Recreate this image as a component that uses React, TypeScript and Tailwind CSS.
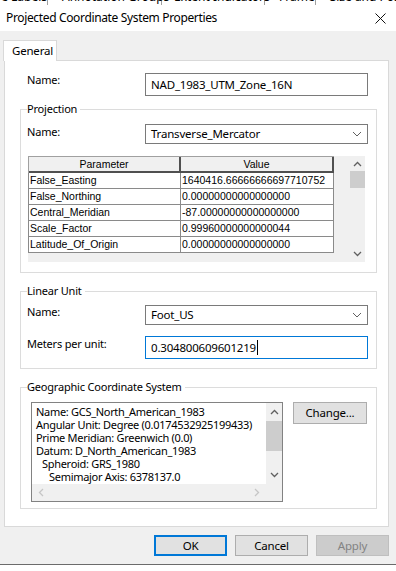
import React from "react";

const ui = { fontFamily: '"Noto Sans", "Open Sans", sans-serif' };
const grid = { fontFamily: '"Liberation Sans", Arial, sans-serif' };

function Chevron({ up = false, color = "#606060" }: { up?: boolean; color?: string }) {
  return (
    <svg width="9" height="6" viewBox="0 0 9 6">
      <polyline
        points={up ? "1,5 4.5,1.5 8,5" : "1,1 4.5,4.5 8,1"}
        fill="none"
        stroke={color}
        strokeWidth="1.3"
      />
    </svg>
  );
}

function SideChevron({ left = false }: { left?: boolean }) {
  return (
    <svg width="6" height="9" viewBox="0 0 6 9">
      <polyline
        points={left ? "5,1 1.5,4.5 5,8" : "1,1 4.5,4.5 1,8"}
        fill="none"
        stroke="#c6c6c6"
        strokeWidth="1.3"
      />
    </svg>
  );
}

function Select({ value }: { value: string }) {
  return (
    <div className="w-[223px] h-[20px] border border-[#7a7a7a] bg-white flex items-center justify-between pl-[5px] pr-[5px]">
      <span className="text-[11.5px] leading-[16px] tracking-[-0.2px]">{value}</span>
      <svg width="10" height="6" viewBox="0 0 10 6">
        <polyline points="1,1 5,5 9,1" fill="none" stroke="#606060" strokeWidth="1" />
      </svg>
    </div>
  );
}

function Group({ title, h, children }: { title: string; h: string; children: React.ReactNode }) {
  return (
    <div className={`relative mx-[15px] w-[357px] ${h} border border-[#dcdcdc]`}>
      <span className="absolute left-[6px] -top-[9px] bg-white pr-[3px] text-[11px] leading-[16px] tracking-[-0.2px]">
        {title}
      </span>
      {children}
    </div>
  );
}

const params = [
  ["False_Easting", "1640416.66666666697710752"],
  ["False_Northing", "0.00000000000000000"],
  ["Central_Meridian", "-87.00000000000000000"],
  ["Scale_Factor", "0.99960000000000044"],
  ["Latitude_Of_Origin", "0.00000000000000000"],
];

const gcs = [
  ["", "Name: GCS_North_American_1983"],
  ["", "Angular Unit: Degree (0.0174532925199433)"],
  ["", "Prime Meridian: Greenwich (0.0)"],
  ["", "Datum: D_North_American_1983"],
  ["pl-[6px]", "Spheroid: GRS_1980"],
  ["pl-[13px]", "Semimajor Axis: 6378137.0"],
];

export default function App() {
  return (
    <div className="w-[396px] h-[571px] bg-white overflow-hidden text-black" style={ui}>
      {/* window behind, cut off */}
      <div className="h-[5px] overflow-hidden bg-white">
        <div className="-mt-[11px] flex text-[12px] leading-[16px] whitespace-nowrap">
          <span className="w-[56px] border-r border-[#a0a0a0] -ml-[8px] pl-0">ive Labels</span>
          <span className="w-[114px] border-r border-[#a0a0a0] pl-[14px]">Annotation Groups</span>
          <span className="w-[103px] border-r border-[#a0a0a0] pl-[12px]">Extent Indicators</span>
          <span className="w-[52px] border-r border-[#a0a0a0] pl-[14px]">Frame</span>
          <span className="pl-[14px]">Size and Position</span>
        </div>
      </div>

      {/* title bar */}
      <div className="h-[26px] bg-white flex items-center justify-between pl-[6px] pr-[10px]">
        <span className="text-[12px] leading-[16px] tracking-[-0.35px]">Projected Coordinate System Properties</span>
        <svg width="11" height="11" viewBox="0 0 11 11">
          <path d="M0.5 0.5 L10.5 10.5 M10.5 0.5 L0.5 10.5" stroke="#111" strokeWidth="1" />
        </svg>
      </div>

      {/* body */}
      <div className="h-[533px] bg-[#f0f0f0] pt-[9px]">
        <div className="relative z-10 ml-[3px] w-[54px] h-[21px] -mb-[1px] bg-white border border-b-0 border-[#d9d9d9] pl-[8px] text-[11.5px] leading-[19px] tracking-[-0.2px]">
          General
        </div>
        <div className="mx-[4px] w-[385px] h-[467px] bg-white border border-[#d9d9d9]">
          {/* name */}
          <div className="flex items-start mt-[12px] pl-[22px]">
            <span className="w-[118px] -mt-[1px] text-[11px] leading-[16px] tracking-[-0.2px]">Name:</span>
            <div className="w-[223px] h-[23px] border border-[#7a7a7a] flex items-center pl-[5px] text-[11.5px] tracking-[-0.2px]">
              NAD_1983_UTM_Zone_16N
            </div>
          </div>

          {/* projection */}
          <div className="mt-[13px]">
            <Group title="Projection" h="h-[164px]">
              <div className="flex items-start mt-[14px] pl-[6px]">
                <span className="w-[118px] text-[11px] leading-[16px] tracking-[-0.2px]">Name:</span>
                <Select value="Transverse_Mercator" />
              </div>
              <div className="mt-[12px] ml-[7px] w-[337px] h-[106px] bg-[#f0f0f0] flex" style={grid}>
                <div className="w-[306px] text-[10.5px]">
                  <div className="flex h-[17px] border-t border-l border-[#a0a0a0]">
                    <div className="w-[152px] h-full border-r-2 border-b-2 border-[#505050] bg-[#f0f0f0] flex items-center justify-center leading-none">
                      Parameter
                    </div>
                    <div className="w-[153px] h-full border-r-2 border-b-2 border-[#505050] bg-[#f0f0f0] flex items-center justify-center leading-none">
                      Value
                    </div>
                  </div>
                  {params.map(([p, v]) => (
                    <div key={p} className="flex h-[16px] border-l border-[#8a8a8a] bg-white">
                      <div className="w-[152px] overflow-hidden whitespace-nowrap border-r border-b border-[#8a8a8a] pl-[1px] leading-[15px]">{p}</div>
                      <div className="w-[153px] overflow-hidden whitespace-nowrap border-r border-b border-[#8a8a8a] pl-[1px] leading-[15px]">{v}</div>
                    </div>
                  ))}
                </div>
                <div className="ml-[16px] w-[15px] h-full flex flex-col items-center justify-between py-[5px]">
                  <Chevron up />
                  <div className="flex-1 w-full">
                    <div className="mt-[4px] h-[17px] w-full bg-[#cdcdcd]" />
                  </div>
                  <Chevron />
                </div>
              </div>
            </Group>
          </div>

          {/* linear unit */}
          <div className="mt-[18px]">
            <Group title="Linear Unit" h="h-[78px]">
              <div className="flex items-start mt-[13px] pl-[6px]">
                <span className="w-[118px] -mt-[1px] text-[11px] leading-[16px] tracking-[-0.2px]">Name:</span>
                <Select value="Foot_US" />
              </div>
              <div className="flex items-start mt-[11px] pl-[6px]">
                <span className="w-[118px] text-[11px] leading-[16px] tracking-[-0.2px]">Meters per unit:</span>
                <div className="w-[223px] h-[23px] border border-[#0078d7] flex items-center pl-[5px] text-[11.5px] tracking-[-0.2px]">
                  0.304800609601219
                  <span className="ml-[1px] w-[1px] h-[15px] bg-black" />
                </div>
              </div>
            </Group>
          </div>

          {/* geographic */}
          <div className="mt-[18px]">
            <Group title="Geographic Coordinate System" h="h-[122px]">
              <div className="flex items-start mt-[14px] pl-[10px]">
                <div className="w-[252px] h-[100px] border border-[#828282] bg-white flex flex-col">
                  <div className="flex h-[81px]">
                    <div className="flex-1 overflow-hidden pl-[4px] pt-[2px] text-[11px] leading-[13px] tracking-[-0.3px] whitespace-nowrap">
                      {gcs.map(([cls, t]) => (
                        <div key={t} className={cls}>{t}</div>
                      ))}
                    </div>
                    <div className="w-[16px] h-full bg-[#f0f0f0] flex flex-col items-center py-[6px]">
                      <Chevron up />
                      <div className="mt-[6px] w-full h-[30px] bg-[#cdcdcd]" />
                      <div className="flex-1" />
                      <Chevron />
                    </div>
                  </div>
                  <div className="flex-1 bg-[#f0f0f0] flex items-center justify-between pl-[6px] pr-[22px]">
                    <SideChevron left />
                    <SideChevron />
                  </div>
                </div>
                <div className="ml-[10px] w-[74px] h-[22px] bg-[#e1e1e1] border border-[#adadad] flex items-center justify-center text-[11.5px] tracking-[-0.2px]">
                  Change...
                </div>
              </div>
            </Group>
          </div>
        </div>

        {/* buttons */}
        <div className="mt-[8px] flex justify-end gap-[8px] pr-[7px] text-[11.5px] tracking-[-0.2px]">
          <div className="w-[73px] h-[21px] bg-[#e1e1e1] border-2 border-[#0078d7] flex items-center justify-center">OK</div>
          <div className="w-[73px] h-[21px] bg-[#e1e1e1] border border-[#adadad] flex items-center justify-center">Cancel</div>
          <div className="w-[73px] h-[21px] bg-[#cccccc] border border-[#bfbfbf] text-[#838383] flex items-center justify-center">Apply</div>
        </div>
      </div>
      <div className="h-[1px] bg-[#6b6b6b]" />
    </div>
  );
}
